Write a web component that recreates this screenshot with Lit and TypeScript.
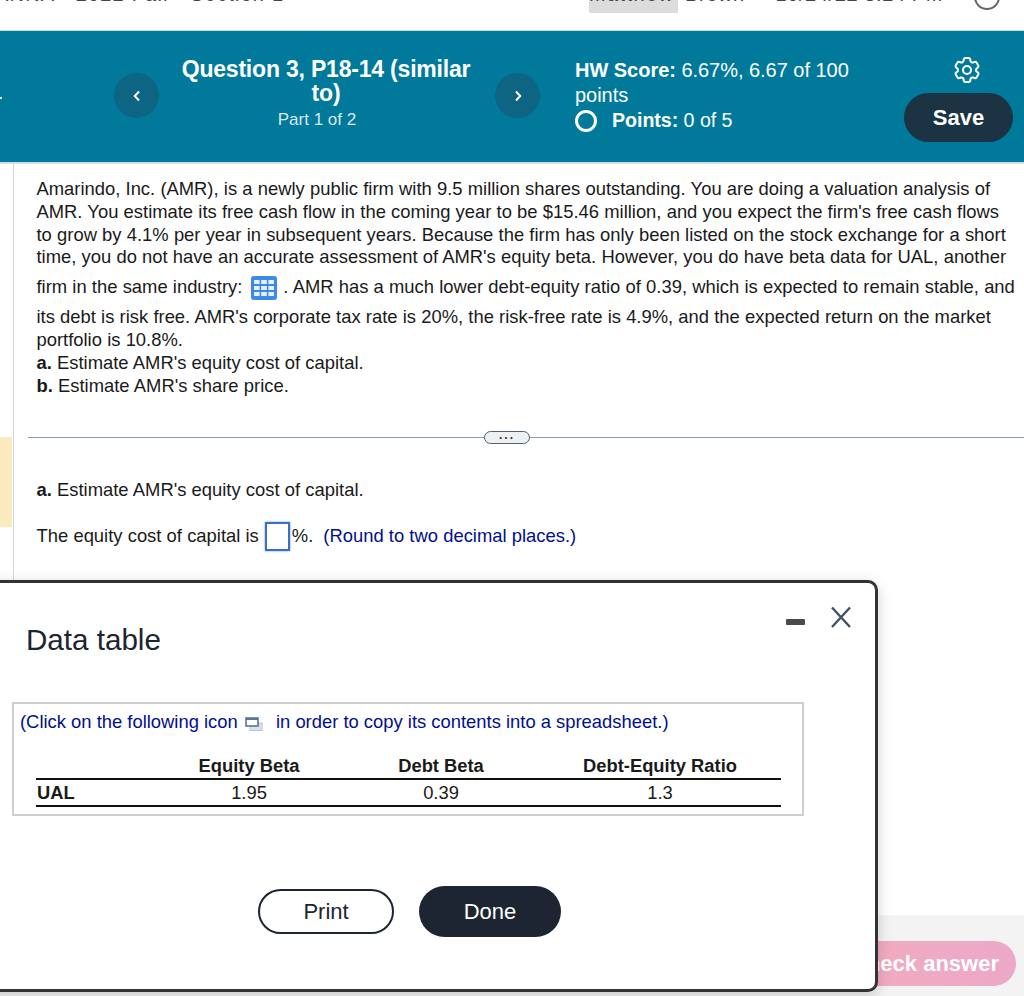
import { LitElement, html, css } from "lit";
import { customElement } from "lit/decorators.js";

@customElement("app-root")
export class AppRoot extends LitElement {
  static styles = css`
    :host {
      display: block;
      position: relative;
      width: 1024px;
      height: 996px;
      overflow: hidden;
      background: #fff;
      font-family: "Liberation Sans", Arial, sans-serif;
      color: #1a1a1a;
    }
    .top {
      height: 30px;
      overflow: hidden;
      display: flex;
      font-size: 20px;
      color: #444;
      white-space: nowrap;
    }
    .top-row {
      display: flex;
      margin-top: -17px;
      height: 30px;
      line-height: 22px;
    }
    .course { width: 594px; margin-left: -5px; letter-spacing: 1.2px; }
    .student { background: #dcdcdc; width: 89px; height: 30px; letter-spacing: 1.4px; }
    .rest { margin-left: 7px; width: 300px; letter-spacing: 0.6px; }
    .clock {
      position: absolute; left: 974px; top: -16px; width: 22px; height: 22px;
      border: 2px solid #666; border-radius: 50%;
    }
    .bar {
      height: 134px;
      box-sizing: border-box;
      background: #00799b;
      border-top: 1px solid #c9dde4;
      border-bottom: 2px solid #cfdde4;
      display: flex;
      color: #fff;
      position: relative;
    }
    .tick { position: absolute; left: 0; top: 66px; width: 2px; height: 2px; background: #dbe8ed; }
    .nav {
      width: 45px; height: 45px; border-radius: 50%;
      background: #0e6483; display: flex; align-items: center; justify-content: center;
      flex: none; margin-top: 42px;
    }
    .nav.prev { margin-left: 114px; }
    .title { width: 320px; margin: 26px 9px 0 7px; text-align: center; white-space: nowrap; }
    .title h1 { margin: 0; font-size: 23px; line-height: 24px; font-weight: 700; letter-spacing: -0.2px; }
    .title p { margin: 5px 18px 0 0; font-size: 17px; line-height: 20px; color: #dbe8ed; }
    .score { margin: 27px 0 0 35px; width: 290px; font-size: 20px; line-height: 25px; letter-spacing: -0.03px; }
    .score b { font-weight: 700; }
    .points { display: flex; align-items: center; gap: 15px; font-size: 19.6px; }
    .ring { width: 16px; height: 16px; border: 3px solid #fff; border-radius: 50%; flex: none; }
    .tools { margin-left: 39px; width: 109px; display: flex; flex-direction: column; align-items: center; padding-top: 23px; }
    .gear { margin-left: 17px; height: 32px; display: block; }
    .save {
      margin-top: 7px; width: 109px; height: 49px; border-radius: 25px; background: #1c3344; flex: none;
      display: flex; align-items: center; justify-content: center; font-size: 22px; font-weight: 700;
    }
    .body { position: relative; height: 832px; }
    .rule-v { position: absolute; left: 13px; top: 0; bottom: 0; width: 1px; background: #cfd8e6; }
    .flag { position: absolute; left: 0; top: 273px; width: 12px; height: 90px; background: #fbeabc; }
    .content { padding: 14px 0 0 36.5px; font-size: 18.4px; word-spacing: 0.1px; line-height: 22.8px; white-space: nowrap; }
    .icon-line { display: block; height: 36px; line-height: 36px; margin-bottom: 1px; }
    .grid-icon { vertical-align: -7px; margin: 0 6px 0 9px; }
    .sep { position: relative; margin: 40px 0 0 -8.5px; height: 1px; background: #8a9bb0; }
    .more {
      position: absolute; left: 456px; top: -6px; width: 44px; height: 11px; background: #eef1f4;
      border: 1px solid #51606e; border-radius: 7px; text-align: center;
      font-size: 12px; line-height: 7px; letter-spacing: 2px; color: #333; font-weight: 700;
    }
    .part { margin-top: 40px; line-height: 24px; }
    .answer { margin-top: 19px; line-height: 30px; display: flex; align-items: center; }
    .box {
      box-sizing: border-box; width: 25px; height: 29px; margin: 0 2px 0 6px;
      border: 2.5px solid #3a6fc4; box-shadow: 0 0 2px #6f9ae0;
    }
    .hint { color: #000f8f; margin-left: 10px; }
    .footer { position: absolute; left: 0; right: 0; top: 751px; height: 81px; background: #f3f3f3; }
    .check {
      position: absolute; left: 760px; top: 26px; width: 256px; height: 45px; border-radius: 23px;
      background: linear-gradient(90deg, #f4aeba, #eca8c8); color: #fff; font-size: 22px; font-weight: 700;
      display: flex; align-items: center; justify-content: flex-end; padding-right: 17px; box-sizing: border-box;
    }
    .dialog {
      position: absolute; left: -14px; top: 580px; width: 892px; height: 412px; box-sizing: border-box;
      border: 3px solid #333; border-radius: 10px; background: #fff;
      box-shadow: 0 3px 14px rgba(0, 0, 0, 0.18);
      padding: 0 0 0 23px;
    }
    .head { display: flex; height: 119px; }
    .head h2 { margin: 40px 0 0 14px; font-size: 29.6px; line-height: 34px; font-weight: 400; width: 760px; color: #1c2530; }
    .minimize { width: 19px; height: 6px; background: #4a4a4a; border-radius: 1px; margin: 36px 0 0 0; }
    .close { margin: 22px 0 0 24px; }
    .frame {
      width: 792px; height: 114px; box-sizing: border-box; border: 2px solid #cfcfcf;
      padding: 6px 22px 0 6px; font-size: 18.4px;
    }
    .note { color: #000f8f; line-height: 24px; white-space: nowrap; }
    .copy { vertical-align: -3px; margin: 0 8px 0 2px; }
    table { border-collapse: collapse; margin: 20px 0 0 16px; width: 745px; font-size: 18.35px; }
    th, td { padding: 0; text-align: center; font-weight: 400; }
    thead th { font-weight: 700; border-bottom: 2px solid #111; height: 24px; }
    tbody td, tbody th { border-bottom: 2px solid #111; height: 25px; }
    tbody th { text-align: left; font-weight: 700; padding-left: 1px; }
    tr > :nth-child(3) { padding-left: 4px; }
    .c0 { width: 123px; }
    .c1 { width: 180px; }
    .c2 { width: 196px; }
    .buttons { display: flex; align-items: center; margin: 70px 0 0 246px; gap: 25px; font-size: 22px; }
    .btn { box-sizing: border-box; display: flex; align-items: center; justify-content: center; border-radius: 26px; }
    .print { width: 136px; height: 45px; border: 2.5px solid #1d2533; color: #1d2533; }
    .done { width: 142px; height: 51px; background: #1d2533; color: #fff; }
  `;

  render() {
    return html`
      <div class="top">
        <div class="top-row">
          <div class="course">ANNA - 2022 Fall - Section 1</div>
          <div class="student">Matthew</div>
          <div class="rest">Brown &nbsp; &nbsp; 10/24/22 3:24 PM</div>
        </div>
        <div class="clock"></div>
      </div>
      <div class="bar">
        <span class="tick"></span>
        <div class="nav prev">
          <svg width="10" height="12" viewBox="0 0 10 12"><path d="M7 1.5 2.8 6 7 10.5" fill="none" stroke="#fff" stroke-width="2"/></svg>
        </div>
        <div class="title">
          <h1>Question 3, P18-14 (similar<br />to)</h1>
          <p>Part 1 of 2</p>
        </div>
        <div class="nav">
          <svg width="10" height="12" viewBox="0 0 10 12"><path d="M3 1.5 7.2 6 3 10.5" fill="none" stroke="#fff" stroke-width="2"/></svg>
        </div>
        <div class="score">
          <div><b>HW Score:</b> 6.67%, 6.67 of 100<br />points</div>
          <div class="points"><span class="ring"></span><span><b>Points:</b> 0 of 5</span></div>
        </div>
        <div class="tools">
          <svg class="gear" width="32" height="32" viewBox="0 0 24 24" fill="none" stroke="#fff" stroke-width="1.5" stroke-linejoin="round">
            <path d="M9.594 3.94c.09-.542.56-.94 1.11-.94h2.593c.55 0 1.02.398 1.11.94l.213 1.281c.063.374.313.686.645.87.074.04.147.083.22.127.325.196.72.257 1.075.124l1.217-.456a1.125 1.125 0 0 1 1.37.49l1.296 2.247a1.125 1.125 0 0 1-.26 1.431l-1.003.827c-.293.241-.438.613-.43.992a7.723 7.723 0 0 1 0 .255c-.008.378.137.75.43.991l1.004.827c.424.35.534.955.26 1.43l-1.298 2.247a1.125 1.125 0 0 1-1.369.491l-1.217-.456c-.355-.133-.75-.072-1.076.124a6.47 6.47 0 0 1-.22.128c-.331.183-.581.495-.644.869l-.213 1.281c-.09.543-.56.94-1.11.94h-2.594c-.55 0-1.019-.398-1.11-.94l-.213-1.281c-.062-.374-.312-.686-.644-.87a6.52 6.52 0 0 1-.22-.127c-.325-.196-.72-.257-1.076-.124l-1.217.456a1.125 1.125 0 0 1-1.369-.49l-1.297-2.247a1.125 1.125 0 0 1 .26-1.431l1.004-.827c.292-.24.437-.613.43-.991a6.932 6.932 0 0 1 0-.255c.007-.38-.138-.751-.43-.992l-1.004-.827a1.125 1.125 0 0 1-.26-1.43l1.297-2.247a1.125 1.125 0 0 1 1.37-.491l1.216.456c.356.133.751.072 1.076-.124.072-.044.146-.086.22-.128.332-.183.582-.495.644-.869l.214-1.28Z"/>
            <circle cx="12" cy="12" r="3"/>
          </svg>
          <div class="save">Save</div>
        </div>
      </div>
      <div class="body">
        <div class="rule-v"></div>
        <div class="flag"></div>
        <div class="content">
          Amarindo, Inc. (AMR), is a newly public firm with 9.5 million shares outstanding. You are doing a valuation analysis of<br />
          AMR. You estimate its free cash flow in the coming year to be $15.46 million, and you expect the firm's free cash flows<br />
          to grow by 4.1% per year in subsequent years. Because the firm has only been listed on the stock exchange for a short<br />
          time, you do not have an accurate assessment of AMR's equity beta. However, you do have beta data for UAL, another<br />
          <span class="icon-line">firm in the same industry:<svg class="grid-icon" width="26" height="24" viewBox="0 0 26 24">
              <rect width="26" height="24" rx="3" fill="#3d88ea" />
              <g fill="#e6f0fc">
                <rect x="3" y="4" width="5.6" height="4" /><rect x="10.2" y="4" width="5.6" height="4" /><rect x="17.4" y="4" width="5.6" height="4" />
                <rect x="3" y="10" width="5.6" height="4" /><rect x="10.2" y="10" width="5.6" height="4" /><rect x="17.4" y="10" width="5.6" height="4" />
                <rect x="3" y="16" width="5.6" height="4" /><rect x="10.2" y="16" width="5.6" height="4" /><rect x="17.4" y="16" width="5.6" height="4" />
              </g>
            </svg>. AMR has a much lower debt-equity ratio of 0.39, which is expected to remain stable, and</span>
          its debt is risk free. AMR's corporate tax rate is 20%, the risk-free rate is 4.9%, and the expected return on the market<br />
          portfolio is 10.8%.<br />
          <b>a.</b> Estimate AMR's equity cost of capital.<br />
          <b>b.</b> Estimate AMR's share price.
          <div class="sep"><div class="more">...</div></div>
          <div class="part"><b>a.</b> Estimate AMR's equity cost of capital.</div>
          <div class="answer">
            The equity cost of capital is<span class="box"></span>%.<span class="hint">(Round to two decimal places.)</span>
          </div>
        </div>
        <div class="footer"><div class="check">Check answer</div></div>
      </div>
      <div class="dialog">
        <div class="head">
          <h2>Data table</h2>
          <div class="minimize"></div>
          <svg class="close" width="24" height="24" viewBox="0 0 24 24"><path d="M3 2.5 21 22M21 2.5 3 22" stroke="#3e5366" stroke-width="2.4" fill="none"/></svg>
        </div>
        <div class="frame">
          <div class="note">
            (Click on the following icon
            <svg class="copy" width="18" height="14" viewBox="0 0 18 14">
              <rect x="5" y="6" width="12" height="7.5" fill="#d9e1ec" stroke="#b9c6d8" />
              <rect x="1" y="1" width="12" height="8" fill="#fff" stroke="#5b7596" stroke-width="1.6" />
              <rect x="1" y="1" width="12" height="2" fill="#5b7596" />
            </svg>
            in order to copy its contents into a spreadsheet.)
          </div>
          <table>
            <thead>
              <tr><th class="c0"></th><th class="c1">Equity Beta</th><th class="c2">Debt Beta</th><th>Debt-Equity Ratio</th></tr>
            </thead>
            <tbody>
              <tr><th>UAL</th><td>1.95</td><td>0.39</td><td>1.3</td></tr>
            </tbody>
          </table>
        </div>
        <div class="buttons">
          <div class="btn print">Print</div>
          <div class="btn done">Done</div>
        </div>
      </div>
    `;
  }
}
